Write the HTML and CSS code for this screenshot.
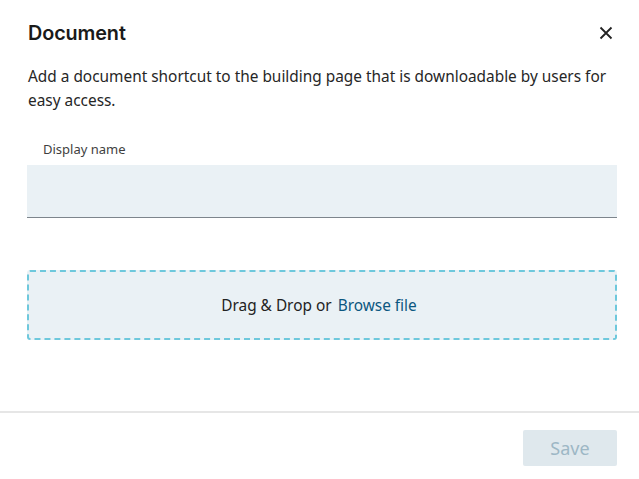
FILE: index.html
```html
<!DOCTYPE html>
<html>
<head>
<meta charset="utf-8">
<link rel="stylesheet" href="styles.css">
</head>
<body>
<div class="modal">
  <div class="content">
    <div class="header">
      <h1 class="title">Document</h1>
      <button class="close" aria-label="Close">
        <svg width="14" height="14" viewBox="0 0 14 14"><path d="M1.5 1.5L12.5 12.5M12.5 1.5L1.5 12.5" stroke="#222" stroke-width="1.8" fill="none"/></svg>
      </button>
    </div>
    <p class="desc">Add a document shortcut to the building page that is downloadable by users for easy access.</p>
    <label class="label">Display name</label>
    <div class="input"></div>
    <div class="drop">
      <span class="drop-text">Drag &amp; Drop or</span>
      <a class="browse">Browse file</a>
    </div>
  </div>
  <div class="footer">
    <button class="save">Save</button>
  </div>
</div>
</body>
</html>
```
FILE: styles.css
```css
* { box-sizing: border-box; }
html, body { margin: 0; padding: 0; background: #fff; }
body { font-family: "Noto Sans", "Open Sans", sans-serif; color: #222; }
.modal { width: 639px; height: 479px; display: flex; flex-direction: column; }
.content { padding: 20px 22px 0 27px; height: 411px; }
.header { display: flex; justify-content: space-between; align-items: center; height: 26px; }
.title { margin: 0 0 0 1px; font-family: "Inter", "Roboto", sans-serif; font-weight: 600; font-size: 19.8px; color: #1a1a1a; letter-spacing: -0.1px; }
.close { background: none; border: 0; padding: 0; width: 14px; height: 14px; margin-right: 4px; display: flex; }
.desc { margin: 19px 0 0 1px; font-size: 15.4px; line-height: 24px; color: #262626; }
.label { display: block; margin: 28px 0 0 16px; font-size: 13px; line-height: 16px; color: #3f3f3f; }
.input { margin-top: 8px; height: 53px; background: #eaf1f5; border-bottom: 1px solid #7d858c; }
.drop { margin-top: 52px; height: 70px; background: #eaf1f5; border: 2px dashed #6ec8dc; border-radius: 3px; display: flex; align-items: center; justify-content: center; gap: 6px; font-size: 15.4px; padding-right: 6px; }
.drop-text { color: #222; }
.browse { color: #0b5780; }
.footer { border-top: 2px solid #e6e6e6; flex: 1; display: flex; justify-content: flex-end; align-items: flex-start; padding: 17px 22px 0 0; }
.save { width: 94px; height: 36px; background: #dfe8ed; border: 0; border-radius: 2px; color: #9db7c5; font-family: "Noto Sans", sans-serif; font-size: 18px; }
```
